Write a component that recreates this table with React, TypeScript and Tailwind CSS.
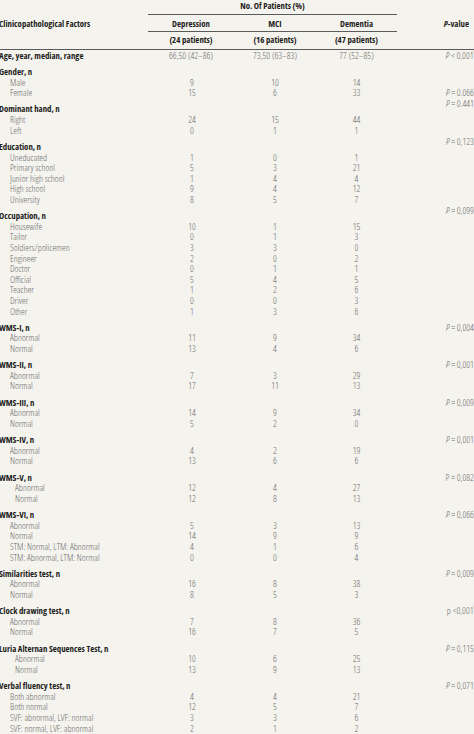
type PVal = { lead: string; italic: boolean; rest: string; sup: string; shift?: boolean };

type Section = {
  title: string;
  vals?: [string, string, string];
  p?: PVal;
  pRow?: number;
  deep?: boolean;
  rows: [string, string, string, string][];
};

const sections: Section[] = [
  {
    title: 'Age, year, median, range',
    vals: ['66,50 (42–86)', '73,50 (63–83)', '77 (52–85)'],
    p: { lead: 'P', italic: true, rest: ' < 0,001', sup: 'b' },
    rows: [],
  },
  {
    title: 'Gender, n',
    p: { lead: 'P', italic: true, rest: ' = 0.066', sup: 'a' },
    pRow: 1,
    rows: [
      ['Male', '9', '10', '14'],
      ['Female', '15', '6', '33'],
    ],
  },
  {
    title: 'Dominant hand, n',
    p: { lead: 'P', italic: true, rest: ' = 0.441', sup: 'a', shift: true },
    rows: [
      ['Right', '24', '15', '44'],
      ['Left', '0', '1', '1'],
    ],
  },
  {
    title: 'Education, n',
    p: { lead: 'P', italic: true, rest: ' = 0,123', sup: 'a', shift: true },
    rows: [
      ['Uneducated', '1', '0', '1'],
      ['Primary school', '5', '3', '21'],
      ['Junior high school', '1', '4', '4'],
      ['High school', '9', '4', '12'],
      ['University', '8', '5', '7'],
    ],
  },
  {
    title: 'Occupation, n',
    p: { lead: 'P', italic: true, rest: ' = 0,099', sup: 'a', shift: true },
    rows: [
      ['Housewife', '10', '1', '15'],
      ['Tailor', '0', '1', '3'],
      ['Soldiers/policemen', '3', '3', '0'],
      ['Engineer', '2', '0', '2'],
      ['Doctor', '0', '1', '1'],
      ['Official', '5', '4', '5'],
      ['Teacher', '1', '2', '6'],
      ['Driver', '0', '0', '3'],
      ['Other', '1', '3', '6'],
    ],
  },
  {
    title: 'WMS-I, n',
    p: { lead: 'P', italic: true, rest: ' = 0,004', sup: 'a' },
    rows: [
      ['Abnormal', '11', '9', '34'],
      ['Normal', '13', '4', '6'],
    ],
  },
  {
    title: 'WMS-II, n',
    p: { lead: 'P', italic: true, rest: ' = 0,001', sup: 'a' },
    rows: [
      ['Abnormal', '7', '3', '29'],
      ['Normal', '17', '11', '13'],
    ],
  },
  {
    title: 'WMS-III, n',
    p: { lead: 'P', italic: true, rest: ' = 0,009', sup: 'a' },
    rows: [
      ['Abnormal', '14', '9', '34'],
      ['Normal', '5', '2', '0'],
    ],
  },
  {
    title: 'WMS-IV, n',
    p: { lead: 'P', italic: true, rest: ' = 0,001', sup: 'a' },
    rows: [
      ['Abnormal', '4', '2', '19'],
      ['Normal', '13', '6', '6'],
    ],
  },
  {
    title: 'WMS-V, n',
    p: { lead: 'P', italic: false, rest: ' = 0,082', sup: 'a' },
    deep: true,
    rows: [
      ['Abnormal', '12', '4', '27'],
      ['Normal', '12', '8', '13'],
    ],
  },
  {
    title: 'WMS-VI, n',
    p: { lead: 'P', italic: true, rest: ' = 0,066', sup: 'a' },
    rows: [
      ['Abnormal', '5', '3', '13'],
      ['Normal', '14', '9', '9'],
      ['STM: Normal, LTM: Abnormal', '4', '1', '6'],
      ['STM: Abnormal, LTM: Normal', '0', '0', '4'],
    ],
  },
  {
    title: 'Similarities test, n',
    p: { lead: 'P', italic: true, rest: ' = 0,009', sup: 'a' },
    rows: [
      ['Abnormal', '16', '8', '38'],
      ['Normal', '8', '5', '3'],
    ],
  },
  {
    title: 'Clock drawing test, n',
    p: { lead: 'p', italic: false, rest: ' <0,001', sup: 'b' },
    rows: [
      ['Abnormal', '7', '8', '36'],
      ['Normal', '16', '7', '5'],
    ],
  },
  {
    title: 'Luria Alternan Sequences Test, n',
    p: { lead: 'P', italic: true, rest: ' = 0,115', sup: 'a' },
    deep: true,
    rows: [
      ['Abnormal', '10', '6', '25'],
      ['Normal', '13', '9', '13'],
    ],
  },
  {
    title: 'Verbal fluency test, n',
    p: { lead: 'P', italic: true, rest: ' = 0,071', sup: 'a' },
    rows: [
      ['Both abnormal', '4', '4', '21'],
      ['Both normal', '12', '5', '7'],
      ['SVF: abnormal, LVF: normal', '3', '3', '6'],
      ['SVF: normal, LVF: abnormal', '2', '1', '2'],
    ],
  },
];

const grid = 'grid grid-cols-[148px_86px_82px_81px_1fr]';
const head = 'font-bold text-[8.8px] text-[#1d1d1b] [font-stretch:75%]';

function PValue({ p }: { p: PVal }) {
  return (
    <span className={`block text-right whitespace-nowrap ${p.shift ? '-translate-y-[5px]' : ''}`}>
      {p.italic ? <i>{p.lead}</i> : p.lead}
      {p.rest}
      <sup className="text-[5.5px] align-[3px]">{p.sup}</sup>
    </span>
  );
}

function Block({ s, first }: { s: Section; first: boolean }) {
  return (
    <div className={first ? '' : 'pt-[5.7px]'}>
      <div className={`${grid} h-[10.6px] leading-[10.6px] items-center`}>
        <div className={`-ml-px whitespace-nowrap ${head}`}>{s.title}</div>
        {s.vals ? (
          s.vals.map((v) => (
            <div key={v} className="text-center">
              {v}
            </div>
          ))
        ) : (
          <div className="col-span-3" />
        )}
        <div>{s.p && s.pRow === undefined && <PValue p={s.p} />}</div>
      </div>
      {s.rows.map((r, i) => (
        <div key={r[0]} className={`${grid} h-[10.6px] leading-[10.6px] items-center`}>
          <div className={`${s.deep ? 'pl-[15px]' : 'pl-[10px]'} whitespace-nowrap`}>{r[0]}</div>
          <div className="text-center pl-[2px]">{r[1]}</div>
          <div className="text-center">{r[2]}</div>
          <div className="text-center">{r[3]}</div>
          <div>{s.p && s.pRow === i && <PValue p={s.p} />}</div>
        </div>
      ))}
    </div>
  );
}

export default function App() {
  return (
    <div className="w-[474px] h-[734px] overflow-hidden bg-[#f4f3ee] font-['Open_Sans',sans-serif] [font-stretch:87.5%] text-[9.4px] font-light text-[#6a6a6a]">
      <div className="w-[476px]">
        {/* column heads */}
        <div className={grid}>
          <div />
          <div className={`col-span-3 h-[15px] border-b border-[#5a5a5a] text-center leading-[12px] ${head}`}>
            No. Of Patients (%)
          </div>
          <div />
        </div>
        <div className={`${grid} leading-[12px] ${head}`}>
          <div className="-ml-px h-[17px] pt-[3px] whitespace-nowrap">Clinicopathological Factors</div>
          <div className="h-[17px] pt-[3px] border-b border-[#5a5a5a] text-center">Depression</div>
          <div className="h-[17px] pt-[3px] border-b border-[#5a5a5a] text-center">MCI</div>
          <div className="h-[17px] pt-[3px] border-b border-[#5a5a5a] text-center">Dementia</div>
          <div className="h-[17px] pt-[3px] pr-[7px] text-right">
            <i>P</i>-value
          </div>
        </div>
        <div className={`${grid} h-[18px] border-b border-[#5a5a5a] pt-[2px] leading-[12px] ${head}`}>
          <div />
          <div className="text-center">(24 patients)</div>
          <div className="text-center">(16 patients)</div>
          <div className="text-center">(47 patients)</div>
          <div />
        </div>

        {/* body */}
        <div className="pt-[0.7px]">
          {sections.map((s, i) => (
            <Block key={s.title} s={s} first={i === 0} />
          ))}
        </div>
      </div>
    </div>
  );
}
